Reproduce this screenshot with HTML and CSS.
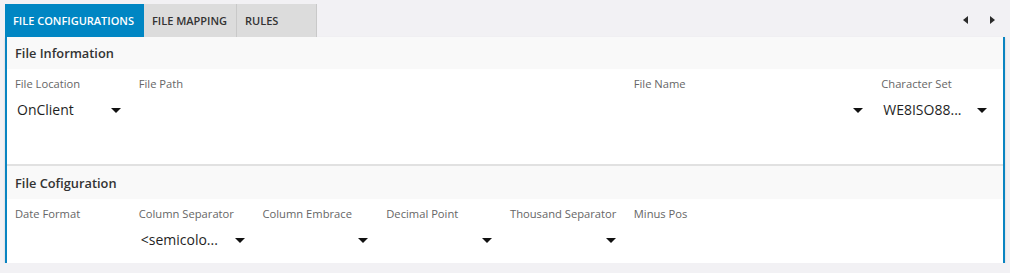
FILE: index.html
```html
<!DOCTYPE html>
<html>
<head>
<meta charset="utf-8">
<link rel="stylesheet" href="styles.css">
</head>
<body>
<div class="page">
  <div class="tabbar">
    <div class="tabs">
      <div class="tab active">FILE CONFIGURATIONS</div>
      <div class="tab">FILE MAPPING</div>
      <div class="tab last">RULES</div>
    </div>
    <div class="nav">
      <span class="tri-left"></span>
      <span class="tri-right"></span>
    </div>
  </div>
  <div class="panel">
    <div class="section-head">File Information</div>
    <div class="section-body body1">
      <div class="field span1">
        <div class="label">File Location</div>
        <div class="select"><span class="value">OnClient</span><span class="caret"></span></div>
      </div>
      <div class="field span4">
        <div class="label">File Path</div>
      </div>
      <div class="field span2">
        <div class="label">File Name</div>
        <div class="select"><span class="value"></span><span class="caret"></span></div>
      </div>
      <div class="field span1">
        <div class="label">Character Set</div>
        <div class="select"><span class="value">WE8ISO88...</span><span class="caret"></span></div>
      </div>
    </div>
    <div class="section-head sep">File Cofiguration</div>
    <div class="section-body body2">
      <div class="field span1">
        <div class="label">Date Format</div>
      </div>
      <div class="field span1">
        <div class="label">Column Separator</div>
        <div class="select"><span class="value">&lt;semicolo...</span><span class="caret"></span></div>
      </div>
      <div class="field span1">
        <div class="label">Column Embrace</div>
        <div class="select"><span class="value"></span><span class="caret"></span></div>
      </div>
      <div class="field span1">
        <div class="label">Decimal Point</div>
        <div class="select"><span class="value"></span><span class="caret"></span></div>
      </div>
      <div class="field span1">
        <div class="label">Thousand Separator</div>
        <div class="select"><span class="value"></span><span class="caret"></span></div>
      </div>
      <div class="field span1">
        <div class="label">Minus Pos</div>
      </div>
    </div>
  </div>
</div>
</body>
</html>
```
FILE: styles.css
```css
html, body {
  margin: 0;
  padding: 0;
  background: #f2f1f4;
  font-family: "Open Sans", "Liberation Sans", sans-serif;
}
.page {
  padding: 4px 5px 0 5px;
}
.tabbar {
  display: flex;
  justify-content: space-between;
  align-items: stretch;
  height: 33px;
}
.tabs {
  display: flex;
}
.tab {
  display: flex;
  align-items: center;
  padding: 0 8px;
  background: #dcdcdc;
  color: #333;
  font-size: 11px;
  font-weight: 600;
  border-right: 1px solid #c9c9c9;
  white-space: nowrap;
}
.tab.active {
  background: #0086c3;
  color: #fff;
  border-right: none;
  width: 123px;
}
.tab:nth-child(2) {
  width: 76px;
}
.tab.last {
  width: 63px;
}
.nav {
  display: flex;
  align-items: center;
  gap: 22px;
  padding-right: 10px;
  padding-bottom: 1px;
}
.tri-left {
  width: 0;
  height: 0;
  border-top: 4.5px solid transparent;
  border-bottom: 4.5px solid transparent;
  border-right: 5px solid #2b2b2b;
}
.tri-right {
  width: 0;
  height: 0;
  border-top: 4.5px solid transparent;
  border-bottom: 4.5px solid transparent;
  border-left: 5px solid #2b2b2b;
}
.panel {
  border-left: 2px solid #0a84c1;
  border-right: 2px solid #0a84c1;
  background: #fff;
  box-shadow: 0 1px 2px rgba(0,0,0,0.15);
}
.section-head {
  height: 32px;
  background: #f9f9f9;
  display: flex;
  align-items: center;
  padding-left: 8px;
  font-size: 12.8px;
  font-weight: 600;
  color: #333;
}
.section-head.sep {
  border-top: 2px solid #e1e1e1;
  height: 33px;
}
.section-body {
  display: grid;
  grid-template-columns: repeat(8, 123.75px);
  padding-left: 8px;
  box-sizing: border-box;
}
.body1 {
  height: 95px;
  padding-top: 7px;
}
.body2 {
  height: 64px;
  padding-top: 7px;
}
.span1 { grid-column: span 1; }
.span2 { grid-column: span 2; }
.span4 { grid-column: span 4; }
.field {
  padding-right: 18px;
}
.label {
  font-size: 11.2px;
  line-height: 16px;
  color: #666;
  white-space: nowrap;
}
.select {
  margin-top: 7px;
  height: 20px;
  display: flex;
  align-items: center;
  justify-content: space-between;
}
.value {
  font-size: 14px;
  color: #1f1f1f;
  padding-left: 2px;
  white-space: nowrap;
}
.caret {
  width: 0;
  height: 0;
  border-left: 5px solid transparent;
  border-right: 5px solid transparent;
  border-top: 5px solid #111;
  margin-top: 2px;
}
```
